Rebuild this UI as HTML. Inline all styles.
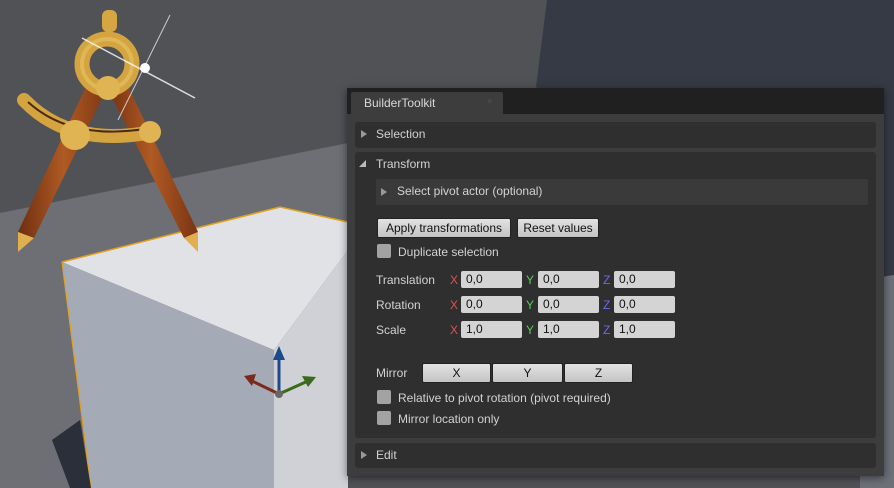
<!DOCTYPE html>
<html><head><meta charset="utf-8"><style>
*{margin:0;padding:0;box-sizing:border-box}
body{width:894px;height:488px;overflow:hidden;position:relative;font-family:"Liberation Sans",sans-serif;font-size:12px;color:#d2d2d2;background:#56585c}
.a{position:absolute}
.panel{left:347px;top:88px;width:537px;height:388px;background:#3d3d3d;box-shadow:0 2px 8px rgba(0,0,0,.5)}
.tabbar{left:347px;top:88px;width:537px;height:26px;background:#202020}
.tab{left:351px;top:92px;width:152px;height:22px;background:#3d3d3d;border-radius:2px 2px 0 0;padding:4px 0 0 13px;color:#d8d8d8}
.sec{background:#2f2f2f;border-radius:3px}
.tri{width:0;height:0;border-top:4px solid transparent;border-bottom:4px solid transparent;border-left:6px solid #999}
.tri2{border-left:7px solid transparent;border-bottom:7px solid #bbb}
.btn{background:linear-gradient(#e2e2e2,#c4c4c4);border:1px solid #222;border-radius:2px;color:#111;text-align:center;line-height:18px}
.cb{width:14px;height:14px;background:#a3a3a3;border-radius:2px}
.in{background:#d4d4d4;border-radius:2px;color:#111;padding-left:5px;line-height:17px;height:17px;width:61px}
.x{color:#e05050}.y{color:#50d050}.z{color:#6a6ae8}
</style></head><body>
<svg class="a" style="left:0;top:0" width="894" height="488">
<defs>
<linearGradient id="leg" x1="0" y1="0" x2="1" y2="0"><stop offset="0" stop-color="#6e2e10"/><stop offset=".5" stop-color="#b05a24"/><stop offset="1" stop-color="#7a3412"/></linearGradient>
</defs>
<rect x="0" y="0" width="894" height="488" fill="#505256"/>
<polygon points="547,0 894,0 894,280 860,280 536,87" fill="#363a44"/>
<polygon points="0,213 348,143 348,488 0,488" fill="#6d6f74"/>
<polygon points="860,280 894,275 894,488 860,488" fill="#6e7178"/>
<polygon points="62,262 280,207 348,222 348,250 274,350" fill="#e1e2e6"/>
<polygon points="62,262 274,350 274,488 91,488" fill="#a5aab7"/>
<polygon points="274,350 348,250 348,488 274,488" fill="#cfd1d6"/>
<polyline points="62,262 280,207 348,222" fill="none" stroke="#e0a020" stroke-width="1.5"/>
<line x1="62" y1="262" x2="91" y2="488" stroke="#e0a020" stroke-width="1.2"/>
<polygon points="52,440 80,420 91,488 70,488" fill="#2b2f3a"/>
<!-- gizmo -->
<line x1="279" y1="394" x2="279" y2="356" stroke="#1d4a8a" stroke-width="3"/>
<polygon points="273,360 279,346 285,360" fill="#1d4a8a"/>
<line x1="279" y1="394" x2="250" y2="380" stroke="#7a2a1a" stroke-width="3"/>
<polygon points="244,376 256,374 252,386" fill="#7a2a1a"/>
<line x1="279" y1="394" x2="308" y2="381" stroke="#3a6a1a" stroke-width="3"/>
<polygon points="316,377 302,376 308,387" fill="#3a6a1a"/>
<circle cx="279" cy="394" r="4" fill="#666"/>
<!-- compass -->
<polygon points="90,78 110,82 34,238 18,232" fill="url(#leg)"/>
<polygon points="104,82 124,78 198,232 184,238" fill="url(#leg)"/>
<polygon points="18,232 34,238 18,252" fill="#e0b050"/>
<polygon points="184,238 198,232 198,252" fill="#e0b050"/>
<rect x="102" y="10" width="15" height="22" rx="6" fill="#d6a642"/>
<circle cx="107" cy="64" r="25" fill="none" stroke="#d4a440" stroke-width="15"/>
<circle cx="107" cy="64" r="25" fill="none" stroke="#e8c466" stroke-width="4" opacity=".6"/>
<path d="M24,100 Q70,148 152,132" fill="none" stroke="#d4a440" stroke-width="14" stroke-linecap="round"/>
<path d="M28,102 Q72,142 150,128" fill="none" stroke="#4a2a10" stroke-width="2"/>
<circle cx="75" cy="135" r="15" fill="#e0b452"/>
<circle cx="150" cy="132" r="11" fill="#e0b452"/>
<circle cx="108" cy="88" r="12" fill="#e0b452"/>
<line x1="82" y1="38" x2="195" y2="98" stroke="#fff" stroke-width="1.5" opacity=".8"/>
<line x1="170" y1="15" x2="118" y2="120" stroke="#fff" stroke-width="1" opacity=".7"/>
<circle cx="145" cy="68" r="5" fill="#fff"/>
</svg>
<div class="a panel"></div>
<div class="a tabbar"></div>
<div class="a tab">BuilderToolkit<span style="position:absolute;left:136px;top:4px;color:#555;font-size:9px">×</span></div>

<div class="a sec" style="left:355px;top:122px;width:521px;height:26px"></div>
<div class="a tri" style="left:361px;top:130px"></div>
<div class="a" style="left:376px;top:127px">Selection</div>

<div class="a sec" style="left:355px;top:152px;width:521px;height:286px"></div>
<div class="a tri2" style="left:359px;top:160px"></div>
<div class="a" style="left:376px;top:157px">Transform</div>
<div class="a" style="left:376px;top:179px;width:492px;height:26px;background:#3a3a3a;border-radius:2px"></div>
<div class="a tri" style="left:381px;top:188px"></div>
<div class="a" style="left:397px;top:184px">Select pivot actor (optional)</div>

<div class="a btn" style="left:377px;top:218px;width:134px;height:20px">Apply transformations</div>
<div class="a btn" style="left:517px;top:218px;width:82px;height:20px">Reset values</div>
<div class="a cb" style="left:377px;top:244px"></div>
<div class="a" style="left:398px;top:245px">Duplicate selection</div>

<div class="a" style="left:376px;top:273px">Translation</div>
<div class="a" style="left:376px;top:298px">Rotation</div>
<div class="a" style="left:376px;top:323px">Scale</div>

<div class="a x" style="left:450px;top:273px">X</div><div class="a in" style="left:461px;top:271px">0,0</div>
<div class="a y" style="left:526px;top:273px">Y</div><div class="a in" style="left:538px;top:271px">0,0</div>
<div class="a z" style="left:603px;top:273px">Z</div><div class="a in" style="left:614px;top:271px">0,0</div>
<div class="a x" style="left:450px;top:298px">X</div><div class="a in" style="left:461px;top:296px">0,0</div>
<div class="a y" style="left:526px;top:298px">Y</div><div class="a in" style="left:538px;top:296px">0,0</div>
<div class="a z" style="left:603px;top:298px">Z</div><div class="a in" style="left:614px;top:296px">0,0</div>
<div class="a x" style="left:450px;top:323px">X</div><div class="a in" style="left:461px;top:321px">1,0</div>
<div class="a y" style="left:526px;top:323px">Y</div><div class="a in" style="left:538px;top:321px">1,0</div>
<div class="a z" style="left:603px;top:323px">Z</div><div class="a in" style="left:614px;top:321px">1,0</div>

<div class="a" style="left:376px;top:366px">Mirror</div>
<div class="a btn" style="left:422px;top:363px;width:69px;height:20px">X</div>
<div class="a btn" style="left:492px;top:363px;width:71px;height:20px">Y</div>
<div class="a btn" style="left:564px;top:363px;width:69px;height:20px">Z</div>
<div class="a cb" style="left:377px;top:390px"></div>
<div class="a" style="left:398px;top:391px">Relative to pivot rotation (pivot required)</div>
<div class="a cb" style="left:377px;top:411px"></div>
<div class="a" style="left:398px;top:412px">Mirror location only</div>

<div class="a sec" style="left:355px;top:443px;width:521px;height:25px"></div>
<div class="a tri" style="left:361px;top:451px"></div>
<div class="a" style="left:376px;top:448px">Edit</div>
</body></html>
